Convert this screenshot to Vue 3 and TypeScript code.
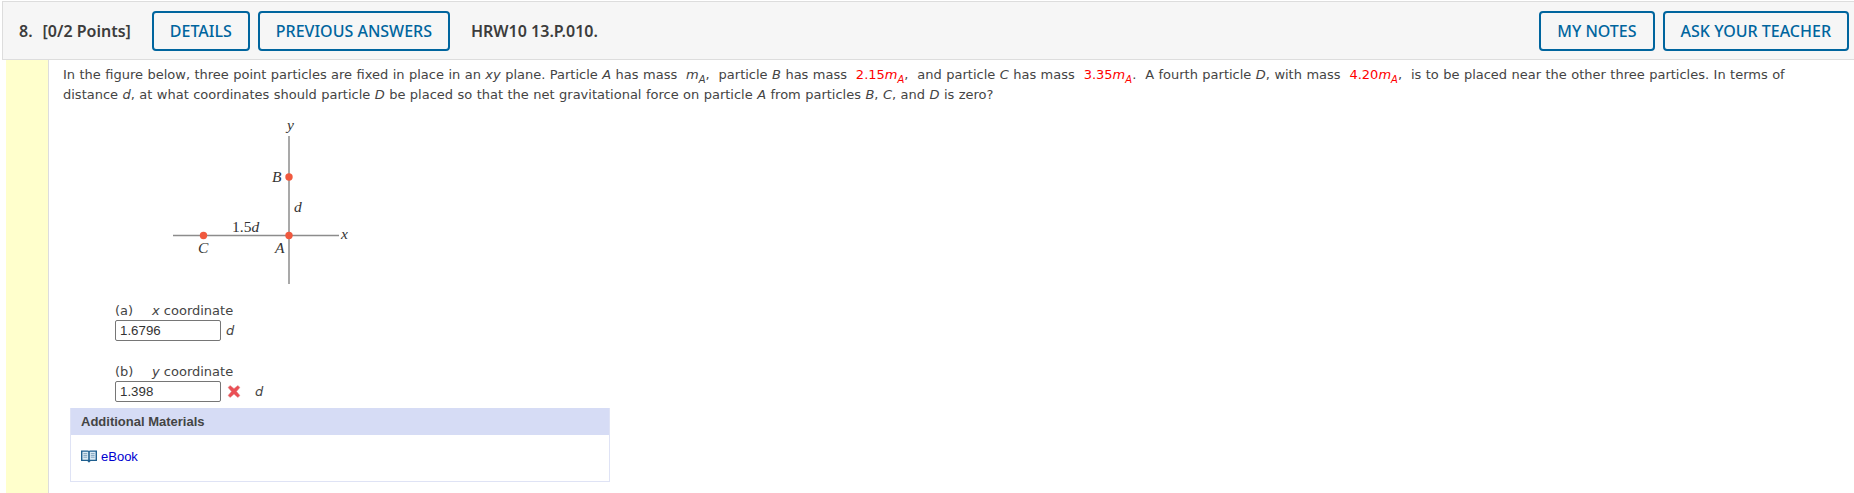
<script setup lang="ts">
type Mass = { lead: string; name: string; value: string; end: string }

const masses: Mass[] = [
  { lead: 'particle', name: 'B', value: '2.15', end: ',' },
  { lead: 'and particle', name: 'C', value: '3.35', end: '.' },
]
const leftLinks = ['DETAILS', 'PREVIOUS ANSWERS']
const rightLinks = ['MY NOTES', 'ASK YOUR TEACHER']
</script>

<template>
  <div class="page">
    <header class="head">
      <span class="num">8.</span>
      <span class="points">[0/2 Points]</span>
      <div class="btns">
        <button v-for="l in leftLinks" :key="l" class="btn">{{ l }}</button>
      </div>
      <span class="code">HRW10 13.P.010.</span>
      <div class="btns right">
        <button v-for="l in rightLinks" :key="l" class="btn">{{ l }}</button>
      </div>
    </header>

    <div class="body">
      <aside class="strip"></aside>
      <main class="content">
        <p class="question">
          In the figure below, three point particles are fixed in place in an <i>xy</i> plane. Particle <i>A</i> has mass &nbsp;<span class="mass"><i>m</i><sub><i>A</i></sub></span>,&nbsp;
          <template v-for="r in masses" :key="r.name">{{ r.lead }} <i>{{ r.name }}</i> has mass &nbsp;<span class="red">{{ r.value }}<i>m</i><sub><i>A</i></sub></span>{{ r.end }}&nbsp; </template>
          A fourth particle <i>D</i>, with mass &nbsp;<span class="red">4.20<i>m</i><sub><i>A</i></sub></span>,&nbsp; is to be placed near the other three particles. In terms of<br />
          distance <i>d</i>, at what coordinates should particle <i>D</i> be placed so that the net gravitational force on particle <i>A</i> from particles <i>B</i>, <i>C</i>, and <i>D</i> is zero?
        </p>

        <svg class="figure" width="220" height="180" viewBox="150 110 220 180">
          <g stroke="#8c8c8c" stroke-width="1.5">
            <line x1="173" y1="235.5" x2="339" y2="235.5" />
            <line x1="289" y1="136" x2="289" y2="284" />
          </g>
          <g fill="#f0593f">
            <circle cx="289" cy="177" r="3.7" />
            <circle cx="289" cy="235.5" r="3.7" />
            <circle cx="203.5" cy="235.5" r="3.7" />
          </g>
          <g class="labels">
            <text x="287" y="130">y</text>
            <text x="272" y="182">B</text>
            <text x="294" y="212">d</text>
            <text x="232" y="232" class="up">1.5<tspan font-style="italic">d</tspan></text>
            <text x="341" y="239">x</text>
            <text x="198" y="253">C</text>
            <text x="275" y="253">A</text>
          </g>
        </svg>

        <div class="part">
          <div class="label"><span class="tag">(a)</span><i>x</i> coordinate</div>
          <div class="answer">
            <input class="field" value="1.6796" readonly />
            <i class="unit">d</i>
          </div>
        </div>
        <div class="part second">
          <div class="label"><span class="tag">(b)</span><i>y</i> coordinate</div>
          <div class="answer">
            <input class="field" value="1.398" readonly />
            <svg class="wrong" width="14" height="13" viewBox="0 0 14 13">
              <path d="M1 2.4 L3.2 .4 L7 3.6 L10.8 .4 L13 2.4 L9.6 6.4 L13 10.6 L10.8 12.6 L7 9.2 L3.2 12.6 L1 10.6 L4.4 6.4 Z" fill="#ea4f55" stroke="#e0a0a0" stroke-width=".5" />
            </svg>
            <i class="unit far">d</i>
          </div>
        </div>

        <section class="materials">
          <h3>Additional Materials</h3>
          <div class="mat-body">
            <svg class="book" width="16" height="13" viewBox="0 0 16 13">
              <path d="M0 .5h7.4l.6.8.6-.8H16v10.6H9.6L8 12.8 6.4 11.1H0z" fill="#1f5f8f" />
              <path d="M1.4 1.8h5.8v8H1.4zM8.8 1.8h5.8v8H8.8z" fill="#dcebf5" />
              <path d="M2.4 3.6h3.8M2.4 5.4h3.8M2.4 7.2h3.8M9.8 3.6h3.8M9.8 5.4h3.8M9.8 7.2h3.8" stroke="#6d93b0" stroke-width=".8" />
            </svg>
            <a class="link">eBook</a>
          </div>
        </section>
      </main>
    </div>
  </div>
</template>

<style>
html, body { margin: 0; background: #fff; }
</style>

<style scoped>
.page {
  width: 1854px;
  height: 493px;
  overflow: hidden;
  box-sizing: border-box;
  padding-top: 1px;
  font-family: "DejaVu Sans", Verdana, sans-serif;
  font-size: 13px;
  color: #444;
}
.head {
  display: flex;
  align-items: center;
  height: 59px;
  box-sizing: border-box;
  margin-left: 2px;
  padding: 0 5px 0 16px;
  background: #f6f6f6;
  border: 1px solid #ddd;
  border-right: none;
  font-family: "Noto Sans", "Open Sans", sans-serif;
  font-size: 16px;
  font-weight: 600;
  color: #3c3c3c;
}
.num { margin-right: 10px; }
.points { margin-right: 21px; }
.btns { display: flex; gap: 8px; }
.right { margin-left: auto; }
.code { margin-left: 21px; }
.btn {
  height: 40px;
  padding: 0 16px;
  box-sizing: border-box;
  background: #f6f6f6;
  border: 2px solid #00659e;
  border-radius: 4px;
  color: #00659e;
  font: inherit;
  font-weight: 500;
}
.body { display: flex; height: 433px; margin-left: 6px; }
.strip {
  flex: none;
  width: 42px;
  background: #ffffcc;
  border-right: 1px solid #ddd;
}
.content { flex: 1; min-width: 0; padding: 5px 0 0 14px; }
.question { margin: 0; line-height: 20px; white-space: nowrap; word-spacing: .3px; }
.question sub { font-size: 10px; line-height: 0; }
.red { color: #f00; }
.figure { display: block; margin: 5px 0 0 87px; }
.labels text {
  font-family: "Liberation Serif", serif;
  font-style: italic;
  font-size: 15.5px;
  fill: #333;
}
.labels .up { font-style: normal; }
.part { margin: 12px 0 0 52px; }
.second { margin-top: 22px; }
.label { line-height: 18px; }
.tag { display: inline-block; width: 37px; }
.answer { display: flex; align-items: center; height: 21px; }
.field {
  width: 106px;
  height: 21px;
  box-sizing: border-box;
  border: 1px solid #767676;
  border-radius: 2px;
  padding: 0 4px;
  font-family: "Liberation Sans", Arial, sans-serif;
  font-size: 13.3px;
  color: #333;
  outline: none;
}
.unit { margin-left: 5px; }
.wrong { margin-left: 6px; }
.far { margin-left: 14px; }
.materials {
  width: 540px;
  margin: 6px 0 0 7px;
  box-sizing: border-box;
  border: 1px solid #dfe3f5;
  border-top: none;
  font-family: "Liberation Sans", Arial, sans-serif;
}
.materials h3 {
  margin: 0;
  height: 27px;
  line-height: 27px;
  padding-left: 10px;
  background: #d6dcf5;
  font-size: 13px;
  font-weight: 700;
  color: #444;
}
.mat-body { display: flex; align-items: center; height: 46px; padding: 0 0 4px 10px; box-sizing: border-box; }
.book { margin-right: 4px; }
.link { color: #0000d0; font-size: 13px; }
</style>
